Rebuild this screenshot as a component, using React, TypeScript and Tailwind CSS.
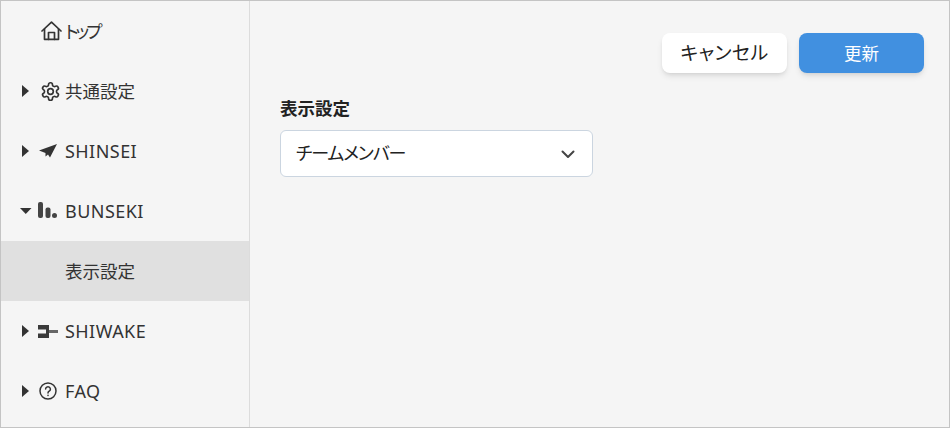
import React from "react";

const font = { fontFamily: '"Noto Sans", "Noto Sans CJK JP", sans-serif' };

function Caret({ open }: { open?: boolean }) {
  return (
    <svg width="12" height="12" viewBox="0 0 12 12" className="ml-[19px] mr-[5px] shrink-0">
      {open ? <path d="M0 3H11.5L5.75 9Z" fill="#333" /> : <path d="M2 0L9 6L2 12Z" fill="#333" />}
    </svg>
  );
}

function Home() {
  return (
    <svg width="21" height="20" viewBox="0 0 21 20" className="ml-[3.5px]" fill="none" stroke="#333" strokeWidth="1.7" strokeLinejoin="round" strokeLinecap="round">
      <path d="M1 10L10.5 1.2L20 10" />
      <path d="M3.5 8V18.3H17.5V8" />
      <path d="M7.5 18.3V11.5H13.5V18.3" />
    </svg>
  );
}

function Gear() {
  return (
    <svg width="21" height="21" viewBox="0 0 24 24" className="ml-[3px]" fill="none" stroke="#333" strokeWidth="1.9" strokeLinejoin="round" strokeLinecap="round">
      <path d="M12.22 2h-.44a2 2 0 0 0-2 2v.18a2 2 0 0 1-1 1.73l-.43.25a2 2 0 0 1-2 0l-.15-.08a2 2 0 0 0-2.73.73l-.22.38a2 2 0 0 0 .73 2.73l.15.1a2 2 0 0 1 1 1.72v.51a2 2 0 0 1-1 1.74l-.15.09a2 2 0 0 0-.73 2.73l.22.38a2 2 0 0 0 2.73.73l.15-.08a2 2 0 0 1 2 0l.43.25a2 2 0 0 1 1 1.73V20a2 2 0 0 0 2 2h.44a2 2 0 0 0 2-2v-.18a2 2 0 0 1 1-1.73l.43-.25a2 2 0 0 1 2 0l.15.08a2 2 0 0 0 2.73-.73l.22-.39a2 2 0 0 0-.73-2.73l-.15-.08a2 2 0 0 1-1-1.74v-.5a2 2 0 0 1 1-1.74l.15-.09a2 2 0 0 0 .73-2.73l-.22-.38a2 2 0 0 0-2.73-.73l-.15.08a2 2 0 0 1-2 0l-.43-.25a2 2 0 0 1-1-1.73V4a2 2 0 0 0-2-2z" />
      <circle cx="12" cy="12" r="3.2" />
    </svg>
  );
}

function Plane() {
  return (
    <svg width="18" height="14" viewBox="0 0 18 14" className="ml-[2px]">
      <path d="M0 6.5L18 0L11 13.5L9 10.5L6.5 12.5V9Z" fill="#333" />
    </svg>
  );
}

function Bars() {
  return (
    <svg width="19" height="16" viewBox="0 0 19 16" className="mb-[2px] ml-[1px]">
      <rect x="0" y="0" width="5" height="16" rx="2" fill="#444" />
      <rect x="7.5" y="5.5" width="5" height="10.5" rx="2" fill="#444" />
      <rect x="14" y="11" width="5" height="5" rx="2.5" fill="#444" />
    </svg>
  );
}

function Plug() {
  return (
    <svg width="20" height="13" viewBox="0 0 20 13" className="ml-[1px]">
      <path d="M11 5H20V8H11Z" fill="#666" />
      <path d="M0 0H11V13H0V8.5H8V4.5H0Z" fill="#3a3a3a" />
    </svg>
  );
}

function Question() {
  return (
    <svg width="18" height="18" viewBox="0 0 18 18" className="ml-[2px]" fill="none" stroke="#333" strokeWidth="1.5" strokeLinecap="round">
      <circle cx="9" cy="9" r="8" />
      <path d="M6.6 7.1a2.4 2.4 0 1 1 3.6 2.1c-.8.5-1.2.9-1.2 1.7" />
      <path d="M9 13.3v.1" />
    </svg>
  );
}

function Row({ caret, icon, label, active, latin, top }: { caret?: "open" | "closed"; icon?: React.ReactNode; label: string; active?: boolean; latin?: boolean; top?: boolean }) {
  return (
    <div className={active ? "flex h-[60px] items-center bg-[#e0e0e0]" : "flex h-[60px] items-center"}>
      {caret ? <Caret open={caret === "open"} /> : <div className="w-[36px] shrink-0" />}
      <div className="flex w-[28px] shrink-0 items-center">{icon}</div>
      <span
        className={
          latin
            ? "text-[18px] leading-6 tracking-[0.45px] text-[#333]"
            : top
              ? "text-[17.5px] leading-6 tracking-[-3px] text-[#333] [font-feature-settings:'palt']"
              : "text-[17.5px] leading-6 text-[#333]"
        }
      >
        {label}
      </span>
    </div>
  );
}

export default function App() {
  return (
    <div style={font} className="flex h-[428px] w-[950px] border border-[#c4c4c4] bg-[#f5f5f5]">
      <nav className="w-[249px] shrink-0 border-r border-[#dcdcdc]">
        <Row icon={<Home />} label="トップ" top />
        <Row caret="closed" icon={<Gear />} label="共通設定" />
        <Row caret="closed" icon={<Plane />} label="SHINSEI" latin />
        <Row caret="open" icon={<Bars />} label="BUNSEKI" latin />
        <Row label="表示設定" active />
        <Row caret="closed" icon={<Plug />} label="SHIWAKE" latin />
        <Row caret="closed" icon={<Question />} label="FAQ" latin />
      </nav>
      <main className="flex-1 pl-[30px] pr-[25px] pt-[32px]">
        <div className="flex justify-end gap-3">
          <button className="h-10 w-[125px] rounded-lg bg-white text-[19px] tracking-[0.4px] text-[#222] shadow-md shadow-black/10 [font-feature-settings:'palt']">キャンセル</button>
          <button className="h-10 w-[125px] rounded-lg bg-[#4190e0] text-[17.5px] text-white shadow-md shadow-black/10">更新</button>
        </div>
        <div className="mt-[23px] text-[17.5px] font-bold leading-6 text-[#222]">表示設定</div>
        <div className="mt-[10px] flex h-[47px] w-[313px] items-center justify-between rounded-md border border-[#cbd5e0] bg-white pl-[15px] pr-[16px]">
          <span className="text-[18px] tracking-[-1.1px] text-[#222] [font-feature-settings:'palt']">チームメンバー</span>
          <svg width="16" height="16" viewBox="0 0 16 16" fill="none" stroke="#444" strokeWidth="2" strokeLinecap="round" strokeLinejoin="round">
            <path d="M2.5 5.5L8 11L13.5 5.5" />
          </svg>
        </div>
      </main>
    </div>
  );
}
